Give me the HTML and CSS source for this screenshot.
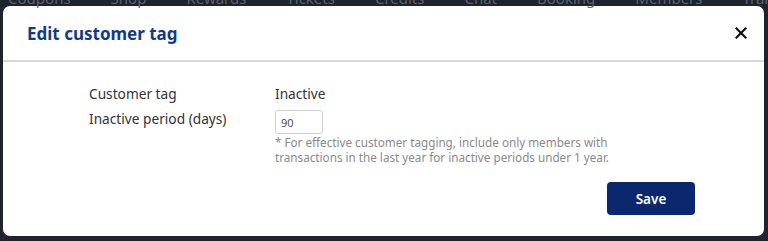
FILE: index.html
```html
<!DOCTYPE html>
<html lang="en">
<head>
    <meta charset="UTF-8">
    <meta name="viewport" content="width=device-width, initial-scale=1.0">
    <title>Edit customer tag</title>
    <link rel="stylesheet" href="styles.css">
</head>
<body>
    <div class="backdrop">
        <div class="tabs">
            <span>Coupons</span><span>Shop</span><span>Rewards</span><span>Tickets</span><span>Credits</span><span>Chat</span><span>Booking</span><span>Members</span><span>Transactions</span>
        </div>
        <div class="modal">
            <div class="modal-header">
                <h2>Edit customer tag</h2>
                <button class="close" aria-label="Close">
                    <svg width="12" height="12" viewBox="0 0 12 12">
                        <path d="M1.5 1.5 L10.5 10.5 M10.5 1.5 L1.5 10.5" stroke="#111" stroke-width="2.2" stroke-linecap="square"/>
                    </svg>
                </button>
            </div>
            <div class="modal-body">
                <div class="row">
                    <div class="label">Customer tag</div>
                    <div class="value">Inactive</div>
                </div>
                <div class="row">
                    <div class="label">Inactive period (days)</div>
                    <div class="value">
                        <input class="days" type="text" value="90">
                        <p class="hint">* For effective customer tagging, include only members with<br>transactions in the last year for inactive periods under 1 year.</p>
                    </div>
                </div>
                <div class="actions">
                    <button class="save">Save</button>
                </div>
            </div>
        </div>
    </div>
</body>
</html>
```

FILE: styles.css
```css
body {
    margin: 0;
    font-family: "Noto Sans", "Open Sans", sans-serif;
    background: #1f232b;
}

.backdrop {
    width: 768px;
    height: 241px;
    overflow: hidden;
}

.tabs {
    display: flex;
    gap: 40px;
    padding-left: 8px;
    margin-top: -12px;
    height: 18px;
    font-size: 15px;
    color: #5b6270;
    white-space: nowrap;
}

.modal {
    margin: 0 4px 0 3px;
    height: 230px;
    background: #fff;
    border-radius: 7px;
    display: flex;
    flex-direction: column;
}

.modal-header {
    display: flex;
    align-items: center;
    justify-content: space-between;
    height: 54px;
    padding: 0 17px 0 24px;
    border-bottom: 2px solid #d9d9d9;
}

.modal-header h2 {
    margin: 0;
    font-size: 17px;
    font-weight: 700;
    color: #123a85;
}

.close {
    border: none;
    background: none;
    padding: 0;
    display: flex;
    cursor: pointer;
}

.modal-body {
    padding: 22px 69px 0 86px;
    flex: 1;
    display: flex;
    flex-direction: column;
    font-size: 13.7px;
    color: #333;
}

.row {
    display: flex;
    margin-bottom: 5px;
}

.label {
    width: 186px;
    line-height: 20px;
}

.value {
    line-height: 20px;
}

.days {
    width: 36px;
    height: 22px;
    padding: 0 5px;
    margin-top: 1px;
    border: 1px solid #cfcfcf;
    border-radius: 3px;
    font-family: "Open Sans", "Noto Sans", sans-serif;
    font-size: 11px;
    color: #444;
}

.hint {
    margin: 1px 0 0;
    font-size: 11.7px;
    line-height: 15px;
    color: #8a8a8a;
}

.actions {
    display: flex;
    justify-content: flex-end;
    margin-top: 12px;
}

.save {
    width: 88px;
    height: 33px;
    border: none;
    border-radius: 4px;
    background: #0b286e;
    color: #fff;
    font-family: "Noto Sans", sans-serif;
    font-size: 13.5px;
    font-weight: 600;
    cursor: pointer;
}
```
